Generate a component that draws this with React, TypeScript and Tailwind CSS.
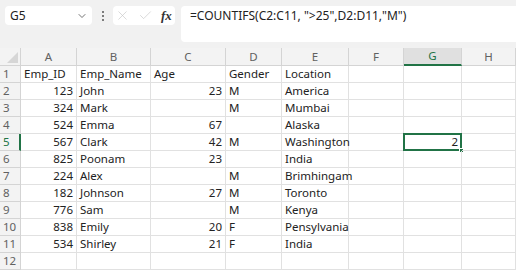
import { ChevronDown, X, Check } from "lucide-react";

const COLS = ["A", "B", "C", "D", "E", "F", "G", "H"];

// [id, name, age, gender, location]
const ROWS: (string | number)[][] = [
  ["Emp_ID", "Emp_Name", "Age", "Gender", "Location"],
  [123, "John", 23, "M", "America"],
  [324, "Mark", "", "M", "Mumbai"],
  [524, "Emma", 67, "", "Alaska"],
  [567, "Clark", 42, "M", "Washington"],
  [825, "Poonam", 23, "", "India"],
  [224, "Alex", "", "M", "Brimhingam"],
  [182, "Johnson", 27, "M", "Toronto"],
  [776, "Sam", "", "M", "Kenya"],
  [838, "Emily", 20, "F", "Pensylvania"],
  [534, "Shirley", 21, "F", "India"],
  ["", "", "", "", ""],
];

const gridCols = "grid grid-cols-[21px_56px_74px_75px_56px_67px_55px_58px_1fr]";

function Cell({ value, selected }: { value: string | number; selected?: boolean }) {
  const isNum = typeof value === "number";
  return (
    <div
      className={`relative h-[17px] border-r border-b border-[#e1e1e1] px-[3px] leading-[16px] whitespace-nowrap ${
        isNum ? "text-right" : "text-left"
      }`}
    >
      {value}
      {selected && (
        <>
          <div className="absolute -left-px -top-px right-[-1px] bottom-[-1px] border-2 border-[#217346]" />
          <div className="absolute right-[-3px] bottom-[-3px] w-[5px] h-[5px] bg-[#217346] border border-white" />
        </>
      )}
    </div>
  );
}

export default function App() {
  return (
    <div className="w-[516px] h-[270px] overflow-hidden bg-white text-[11.5px] text-[#222]" style={{ fontFamily: '"Noto Sans", sans-serif' }}>
      {/* Formula bar */}
      <div className="h-[48px] bg-[#f1f1f1] flex items-start pt-[6px] pl-[5px]">
        <div className="w-[87px] h-[19px] bg-white rounded-[4px] flex items-center justify-between pl-[5px] pr-[4px] text-[12px]">
          <span>G5</span>
          <ChevronDown size={12} strokeWidth={1.5} className="text-[#444]" />
        </div>
        <div className="w-[21px] h-[19px] flex flex-col items-center justify-center gap-[2px]">
          <span className="w-[2px] h-[2px] bg-[#555] rounded-full" />
          <span className="w-[2px] h-[2px] bg-[#555] rounded-full" />
          <span className="w-[2px] h-[2px] bg-[#555] rounded-full" />
        </div>
        <div className="w-[62px] h-[19px] bg-white rounded-[4px] flex items-center pl-[2px] gap-[8px]">
          <X size={15} strokeWidth={1} className="text-[#c4c4c4]" />
          <Check size={15} strokeWidth={1} className="text-[#c4c4c4]" />
          <span className="italic font-semibold text-[13px] text-[#333]" style={{ fontFamily: '"Liberation Serif", serif' }}>
            fx
          </span>
        </div>
        <div className="ml-[6px] flex-1 h-[36px] bg-white rounded-l-[4px] pl-[9px] pt-[1px] text-[12px] text-[#222]">
          =COUNTIFS(C2:C11, "&gt;25",D2:D11,"M")
        </div>
      </div>

      {/* Column headers */}
      <div className={`${gridCols} h-[18px] bg-[#f3f3f3] text-[#616161]`}>
        <div className="relative border-r border-b border-[#d4d4d4]">
          <div className="absolute right-[2px] bottom-[2px] w-0 h-0 border-l-[11px] border-l-transparent border-b-[11px] border-b-[#d6d6d6]" />
        </div>
        {COLS.map((c) => (
          <div
            key={c}
            className={`flex items-center justify-center border-r border-[#d4d4d4] leading-none ${
              c === "G" ? "bg-[#e0e0e0] text-[#217346] border-b-2 border-b-[#217346]" : "border-b border-b-[#d4d4d4]"
            }`}
          >
            {c}
          </div>
        ))}
      </div>

      {/* Rows */}
      {ROWS.map((row, i) => {
        const n = i + 1;
        const active = n === 5;
        return (
          <div key={n} className={gridCols}>
            <div
              className={`h-[17px] bg-[#f3f3f3] leading-[16px] pl-[3px] border-b border-[#d4d4d4] ${
                active ? "text-[#217346] border-r-2 border-r-[#217346]" : "text-[#616161] border-r border-r-[#d4d4d4]"
              }`}
            >
              {n}
            </div>
            {row.map((v, j) => (
              <Cell key={j} value={v} />
            ))}
            <Cell value="" />
            <Cell value={active ? 2 : ""} selected={active} />
            <Cell value="" />
          </div>
        );
      })}
    </div>
  );
}
